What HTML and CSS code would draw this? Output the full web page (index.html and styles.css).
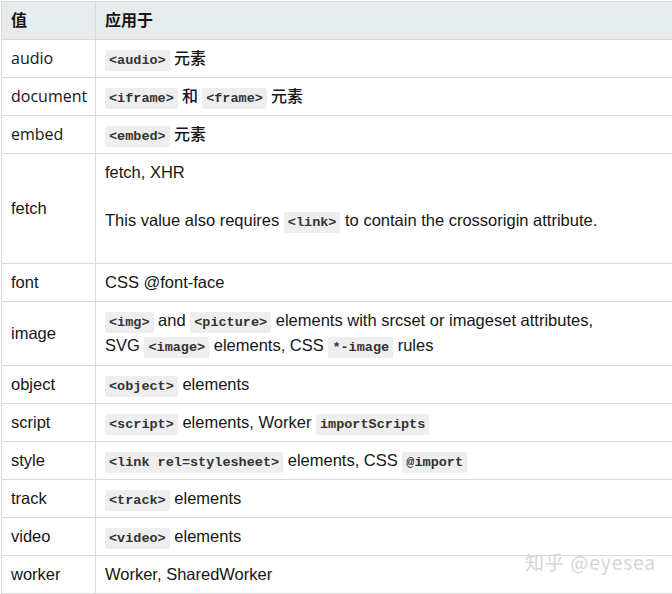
FILE: index.html
```html
<!DOCTYPE html>
<html lang="zh-CN">
<head>
    <meta charset="UTF-8">
    <title>as 属性的值</title>
    <link rel="stylesheet" href="styles.css">
</head>
<body>
    <table class="values">
        <colgroup>
            <col class="col-value">
            <col>
        </colgroup>
        <thead>
            <tr class="top">
                <th>值</th>
                <th>应用于</th>
            </tr>
        </thead>
        <tbody>
            <tr class="top">
                <td>audio</td>
                <td><code>&lt;audio&gt;</code> 元素</td>
            </tr>
            <tr class="top">
                <td>document</td>
                <td><code>&lt;iframe&gt;</code> 和 <code>&lt;frame&gt;</code> 元素</td>
            </tr>
            <tr class="top">
                <td>embed</td>
                <td><code>&lt;embed&gt;</code> 元素</td>
            </tr>
            <tr>
                <td>fetch</td>
                <td class="multi">
                    <p>fetch, XHR</p>
                    <p>This value also requires <code>&lt;link&gt;</code> to contain the crossorigin attribute.</p>
                </td>
            </tr>
            <tr>
                <td>font</td>
                <td>CSS @font-face</td>
            </tr>
            <tr>
                <td>image</td>
                <td class="two-lines"><code>&lt;img&gt;</code> and <code>&lt;picture&gt;</code> elements with srcset or imageset attributes,<br>SVG <code>&lt;image&gt;</code> elements, CSS <code>*-image</code> rules</td>
            </tr>
            <tr>
                <td>object</td>
                <td><code>&lt;object&gt;</code> elements</td>
            </tr>
            <tr>
                <td>script</td>
                <td><code>&lt;script&gt;</code> elements, Worker <code>importScripts</code></td>
            </tr>
            <tr>
                <td>style</td>
                <td><code>&lt;link rel=stylesheet&gt;</code> elements, CSS <code>@import</code></td>
            </tr>
            <tr>
                <td>track</td>
                <td><code>&lt;track&gt;</code> elements</td>
            </tr>
            <tr>
                <td>video</td>
                <td><code>&lt;video&gt;</code> elements</td>
            </tr>
            <tr>
                <td>worker</td>
                <td>Worker, SharedWorker</td>
            </tr>
        </tbody>
    </table>
    <span class="watermark">知乎 @eyesea</span>
</body>
</html>
```

FILE: styles.css
```css
body {
    margin: 0;
    background-color: #fff;
    font-family: "Liberation Sans", Arial, sans-serif;
    color: #161616;
    overflow: hidden;
}
.values {
    border-collapse: collapse;
    table-layout: fixed;
    width: 671px;
    margin: 1px 0 0 1px;
    font-size: 16.5px;
    line-height: 24px;
}
.col-value {
    width: 94px;
}
.values th,
.values td {
    border: 1px solid #dadada;
    border-right: none;
    padding: 6px 4px 7px 9px;
    text-align: left;
    vertical-align: middle;
    white-space: nowrap;
}
.values th {
    background-color: #e6ecee;
    font-weight: bold;
    font-family: "Open Sans", "Noto Sans CJK SC", sans-serif;
    font-size: 16px;
}
.values tr.top td {
    font-family: "Open Sans", "Noto Sans CJK SC", sans-serif;
    font-size: 16px;
    font-weight: 500;
}
.values td.multi {
    padding-top: 6px;
    padding-bottom: 7px;
}
.multi p {
    margin: 0 0 24px;
}
.values td.two-lines {
    line-height: 25px;
}
code {
    font-family: "Liberation Mono", "DejaVu Sans Mono", monospace;
    font-size: 13.5px;
    line-height: 1;
    font-weight: bold;
    color: #333;
    background-color: #eeeeee;
    padding: 3px 4px;
    border-radius: 2px;
}
.watermark {
    position: absolute;
    left: 525px;
    top: 548px;
    white-space: nowrap;
    font-family: "Noto Sans CJK SC", sans-serif;
    font-size: 19px;
    letter-spacing: 1px;
    color: #d4d4d4;
    text-shadow: 0 0 1px #fff;
}
```
